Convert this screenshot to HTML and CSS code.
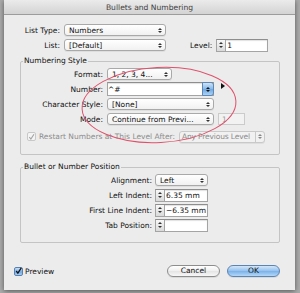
FILE: index.html
```html
<!DOCTYPE html>
<html lang="en">
<head>
    <meta charset="UTF-8">
    <meta name="viewport" content="width=device-width, initial-scale=1.0">
    <title>Bullets and Numbering</title>
    <link rel="stylesheet" href="styles.css">
</head>
<body>
    <div class="window">
        <div class="titlebar">Bullets and Numbering</div>

        <div class="top">
            <div class="row">
                <span class="lbl lbl-top">List Type:</span>
                <div class="select w-list">Numbers<span class="arrows"></span></div>
            </div>
            <div class="row">
                <span class="lbl lbl-top">List:</span>
                <div class="select w-list">[Default]<span class="arrows"></span></div>
                <span class="lbl level-lbl">Level:</span>
                <div class="spinfield w-level"><span class="spin"></span><span class="value">1</span></div>
            </div>
        </div>

        <fieldset class="group numbering">
            <legend>Numbering Style</legend>
            <div class="row">
                <span class="lbl lbl-num">Format:</span>
                <div class="select w-format">1, 2, 3, 4...<span class="arrows"></span></div>
            </div>
            <div class="row">
                <span class="lbl lbl-num">Number:</span>
                <div class="combo w-wide">
                    <span class="value">^#</span>
                    <span class="combo-btn"><span class="arrows"></span></span>
                </div>
                <svg class="flyout" width="5" height="6" viewBox="0 0 5 6"><polygon points="0,0 4,3 0,6" fill="#111"/></svg>
            </div>
            <div class="row">
                <span class="lbl lbl-num">Character Style:</span>
                <div class="select w-wide">[None]<span class="arrows"></span></div>
            </div>
            <div class="row">
                <span class="lbl lbl-num">Mode:</span>
                <div class="select w-wide">Continue from Previ...<span class="arrows"></span></div>
                <div class="field disabled w-start">1</div>
            </div>
            <div class="row restart">
                <span class="check disabled">
                    <svg width="8" height="8" viewBox="0 0 8 8"><path d="M1.5 4.2 L3.3 6.3 L6.8 0.8" fill="none" stroke="#a4a4a4" stroke-width="1.3"/></svg>
                </span>
                <span class="dim">Restart Numbers at This Level After:</span>
                <div class="select disabled w-after"><span class="after-text">Any Previous Level</span><span class="arrows split"></span></div>
            </div>
        </fieldset>

        <fieldset class="group position">
            <legend>Bullet or Number Position</legend>
            <div class="row">
                <span class="lbl lbl-pos">Alignment:</span>
                <div class="select w-pos">Left<span class="arrows"></span></div>
            </div>
            <div class="row">
                <span class="lbl lbl-pos">Left Indent:</span>
                <div class="spinfield w-pos"><span class="spin"></span><span class="value">6.35 mm</span></div>
            </div>
            <div class="row">
                <span class="lbl lbl-pos">First Line Indent:</span>
                <div class="spinfield w-pos"><span class="spin"></span><span class="value">&minus;6.35 mm</span></div>
            </div>
            <div class="row">
                <span class="lbl lbl-pos">Tab Position:</span>
                <div class="spinfield w-pos"><span class="spin"></span><span class="value"></span></div>
            </div>
        </fieldset>

        <div class="footer">
            <span class="check preview">
                <svg width="8" height="8" viewBox="0 0 8 8"><path d="M1.4 4 L3.3 6.4 L7.2 0.4" fill="none" stroke="#111" stroke-width="1.4"/></svg>
            </span>
            <span class="preview-lbl">Preview</span>
            <button class="btn">Cancel</button>
            <button class="btn btn-ok">OK</button>
        </div>

        <!-- red hand-drawn annotation around the Number field -->
        <svg class="mark" width="291" height="290" viewBox="0 0 291 290">
            <ellipse cx="155" cy="105" rx="77" ry="37.5" transform="rotate(-3 155 105)" fill="none" stroke="#e0506a" stroke-width="1"/>
        </svg>
    </div>
</body>
</html>
```

FILE: styles.css
```css
body {
    margin: 0;
    width: 300px;
    height: 293px;
    overflow: hidden;
    background: #ababab;
    font-family: "DejaVu Sans", sans-serif;
    font-size: 7.5px;
    color: #111;
}
.window {
    position: relative;
    margin-left: 4px;
    width: 291px;
    height: 290px;
    background: #ececec;
    box-shadow: 0 1px 5px rgba(0, 0, 0, 0.5);
}
.titlebar {
    height: 14px;
    line-height: 15px;
    text-align: center;
    font-size: 7.6px;
    color: #404040;
    background: linear-gradient(#ebebeb, #d3d3d3);
    border-bottom: 1px solid #9c9c9c;
}

.row {
    display: flex;
    align-items: center;
    height: 14px;
}
.row > * { flex-shrink: 0; }
.lbl {
    text-align: right;
    white-space: nowrap;
}
.lbl-top { width: 56px; margin-right: 4px; }
.lbl-num { width: 82px; margin-right: 4px; }
.lbl-pos { width: 131px; margin-right: 3px; }
.level-lbl { margin-left: 24px; margin-right: 4px; }

.top {
    display: flex;
    flex-direction: column;
    gap: 1px;
    padding-top: 8px;
}

/* popup menus */
.select {
    box-sizing: border-box;
    display: flex;
    align-items: center;
    justify-content: space-between;
    height: 12px;
    padding-left: 4px;
    background: linear-gradient(#ffffff, #f1f1f1);
    border: 1px solid #a9a9a9;
    border-radius: 3px;
    box-shadow: 0 1px 0 rgba(0, 0, 0, 0.06);
    white-space: nowrap;
    overflow: hidden;
}
.select.disabled {
    padding-left: 2px;
    color: #8c8c8c;
    background: #f1f1f1;
    border-color: #c9c9c9;
}
.after-text { letter-spacing: -0.15px; }
.arrows {
    display: flex;
    flex-direction: column;
    gap: 1px;
    margin-right: 3px;
}
.arrows::before, .arrows::after {
    content: "";
    border-left: 2px solid transparent;
    border-right: 2px solid transparent;
}
.arrows::before { border-bottom: 2.5px solid #333; }
.arrows::after { border-top: 2.5px solid #333; }
.arrows.split {
    flex-shrink: 0;
    height: 100%;
    justify-content: center;
    margin-right: 0;
    padding: 0 2px;
    border-left: 1px solid #c9c9c9;
}
.arrows.split::before { border-bottom-color: #888; }
.arrows.split::after { border-top-color: #888; }

.w-list { width: 102px; }
.w-format { width: 65px; }
.w-wide { width: 107px; }
.w-after { width: 86px; margin-left: 4px; }
.w-pos { width: 53px; }
.w-level { width: 52px; height: 14px; }
.w-start { width: 27px; margin-left: 4px; }

/* text fields */
.field, .spinfield, .combo {
    box-sizing: border-box;
    display: flex;
    align-items: center;
    height: 13px;
    background: #fff;
    border: 1px solid #a4a4a4;
    border-top-color: #8e8e8e;
    box-shadow: inset 0 1px 1px rgba(0, 0, 0, 0.12);
}
.field { padding-left: 3px; }
.field.disabled {
    height: 12px;
    color: #9a9a9a;
    background: #f2f2f2;
    border-color: #cbcbcb;
    box-shadow: none;
}
.value { padding-left: 1px; white-space: nowrap; }
.spin {
    align-self: stretch;
    width: 8px;
    flex: none;
    display: flex;
    flex-direction: column;
    align-items: center;
    justify-content: center;
    gap: 2px;
    background: linear-gradient(#f8f8f8, #dadada);
    border-right: 1px solid #a4a4a4;
}
.spin::before, .spin::after {
    content: "";
    border-left: 2px solid transparent;
    border-right: 2px solid transparent;
}
.spin::before { border-bottom: 2px solid #333; }
.spin::after { border-top: 2px solid #333; }

.combo {
    height: 14px;
    justify-content: space-between;
    padding-left: 0;
}
.combo .value { padding-left: 0; }
.combo-btn {
    align-self: stretch;
    width: 10px;
    display: flex;
    align-items: center;
    justify-content: center;
    margin: -1px -1px -1px 0;
    border: 1px solid #5f87b5;
    border-radius: 0 3px 3px 0;
    background: linear-gradient(#cfe3f7, #84b8ea 50%, #6ea6e0 51%, #a9d2f6);
}
.combo-btn .arrows { margin: 0; }
.combo-btn .arrows::before { border-bottom-color: #111; }
.combo-btn .arrows::after { border-top-color: #111; }
.flyout { margin-left: 7px; margin-top: -7px; }

/* group boxes */
.group {
    margin: 0 0 0 16px;
    width: 260px;
    box-sizing: border-box;
    padding: 1px 0 10px 0;
    border: 1px solid #c4c4c4;
    border-radius: 2px;
    display: flex;
    flex-direction: column;
    gap: 1px;
}
.group legend {
    margin-left: 2px;
    padding: 0 1px;
    line-height: 10px;
}
.numbering { margin-top: 4px; }
.position { margin-top: 7px; }
.restart { margin-top: 2px; height: 15px; }
.dim { color: #8c8c8c; white-space: nowrap; }

.check {
    box-sizing: border-box;
    width: 9px;
    height: 9px;
    display: flex;
    align-items: center;
    justify-content: center;
    border-radius: 2px;
}
.check.disabled {
    margin-left: 6px;
    margin-right: 3px;
    background: #f4f4f4;
    border: 1px solid #c8c8c8;
}
.check.preview {
    background: linear-gradient(#c6def6, #7db2e8 50%, #6ba5e2 51%, #a8d0f6);
    border: 1px solid #5a80ad;
    margin-left: 10px;
    margin-right: 2px;
}

.footer {
    display: flex;
    align-items: center;
    height: 12px;
    margin-top: 22px;
}
.preview-lbl { flex: 1; }
.btn {
    box-sizing: border-box;
    width: 53px;
    height: 12px;
    padding: 0;
    font-family: inherit;
    font-size: 7.5px;
    line-height: 10px;
    color: #111;
    background: linear-gradient(#ffffff, #efefef 50%, #e4e4e4 51%, #f7f7f7);
    border: 1px solid #8d8d8d;
    border-radius: 6px;
    box-shadow: 0 1px 0 rgba(0, 0, 0, 0.08);
}
.btn-ok {
    margin-left: 7px;
    margin-right: 15px;
    background: linear-gradient(#d3e6f9, #93c1ee 50%, #79b1ea 51%, #b3d8f8);
    border-color: #5c84b2;
}

.mark {
    position: absolute;
    left: 0;
    top: 0;
    pointer-events: none;
}
```
